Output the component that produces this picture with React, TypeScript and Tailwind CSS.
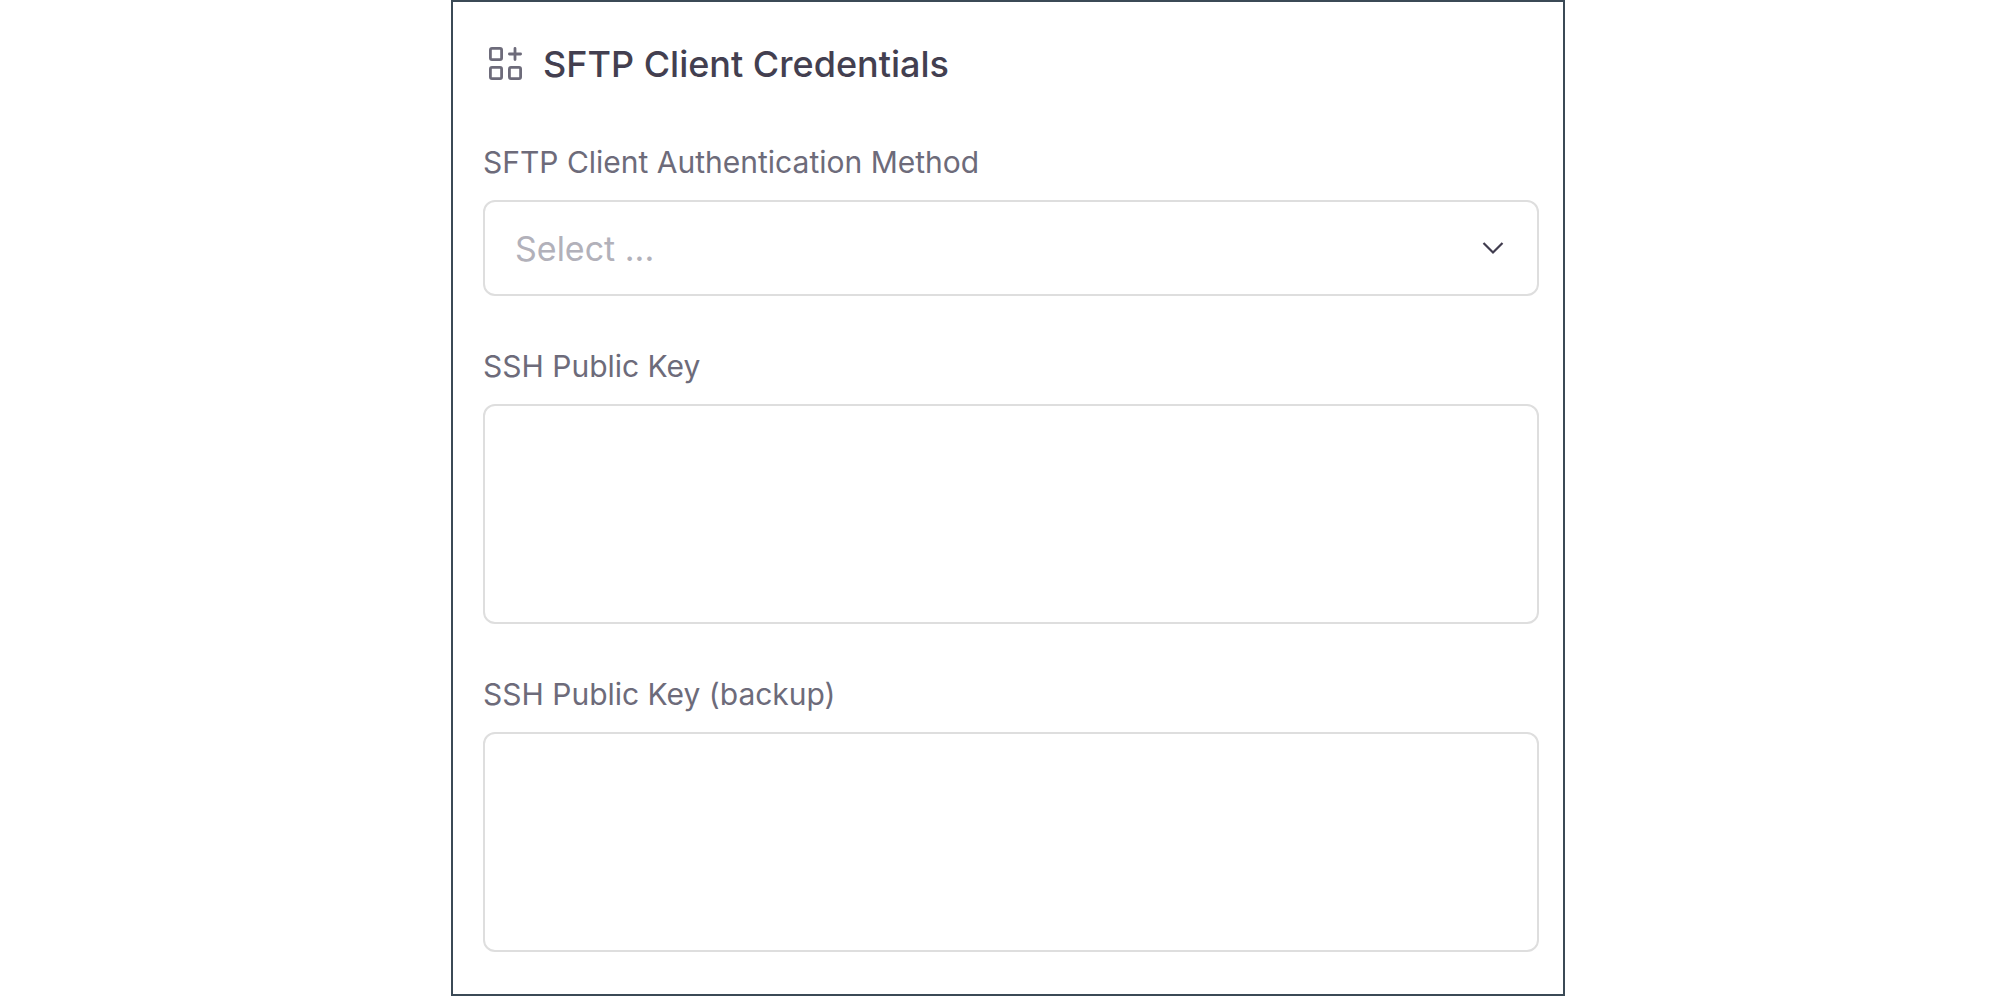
import React, { useState } from 'react';

interface KeyFieldProps {
  id: string;
  label: string;
}

const labelClass = 'mb-[18px] self-start text-[30px] leading-10 text-[#6d6b7a]';
const boxClass = 'w-full rounded-xl border-2 border-[#dedede] bg-transparent outline-none focus:border-[#9d9ba8]';

function KeyField({ id, label }: KeyFieldProps) {
  const [value, setValue] = useState('');

  return (
    <div className="flex flex-col">
      <label htmlFor={id} className={labelClass}>{label}</label>
      <textarea
        id={id}
        value={value}
        onChange={e => setValue(e.target.value)}
        className={`${boxClass} block h-[220px] resize-none px-8 py-6 text-[30px] leading-10 text-[#433f50]`}
      />
    </div>
  );
}

function AppsAddIcon() {
  return (
    <svg
      width="34"
      height="34"
      viewBox="0 0 34 34"
      fill="none"
      stroke="#6d6b7a"
      strokeWidth="2.8"
      strokeLinecap="round"
      aria-hidden="true"
    >
      <rect x="1.4" y="1.4" width="11.2" height="11.2" rx="1.6" />
      <rect x="1.4" y="20.4" width="11.2" height="11.2" rx="1.6" />
      <rect x="20.4" y="20.4" width="11.2" height="11.2" rx="1.6" />
      <path d="M26 1.4v11.2M20.4 7h11.2" />
    </svg>
  );
}

export default function App() {
  const [method, setMethod] = useState('');

  return (
    <main className="min-h-screen bg-white font-['Inter',sans-serif]">
      <form className="mx-auto w-full max-w-[1114px] border-2 border-[#3b4a56] bg-white pt-[38px] pr-6 pb-[42px] pl-[30px]">
        <h1 className="mb-[54px] flex items-center gap-5 pl-[6px] text-[36px] leading-[48px] font-medium text-[#433f50]">
          <AppsAddIcon />
          SFTP Client Credentials
        </h1>

        <div className="flex flex-col gap-[50px]">
          <div className="flex flex-col">
            <label htmlFor="auth-method" className={labelClass}>SFTP Client Authentication Method</label>
            <div className="relative">
              <select
                id="auth-method"
                value={method}
                onChange={e => setMethod(e.target.value)}
                className={`${boxClass} block h-24 appearance-none pr-20 pl-[30px] text-[34px] text-[#b2b1ba]`}
              >
                <option value="">Select ...</option>
              </select>
              {/* Replaces the native arrow */}
              <svg
                className="pointer-events-none absolute top-1/2 right-[34px] -translate-y-1/2"
                width="24"
                height="14"
                viewBox="0 0 24 14"
                fill="none"
                stroke="#403c4e"
                strokeWidth="2.2"
                aria-hidden="true"
              >
                <path d="M2.5 2l9.5 9.5L21.5 2" />
              </svg>
            </div>
          </div>

          <KeyField id="ssh-key" label="SSH Public Key" />
          <KeyField id="ssh-key-backup" label="SSH Public Key (backup)" />
        </div>
      </form>
    </main>
  );
}
